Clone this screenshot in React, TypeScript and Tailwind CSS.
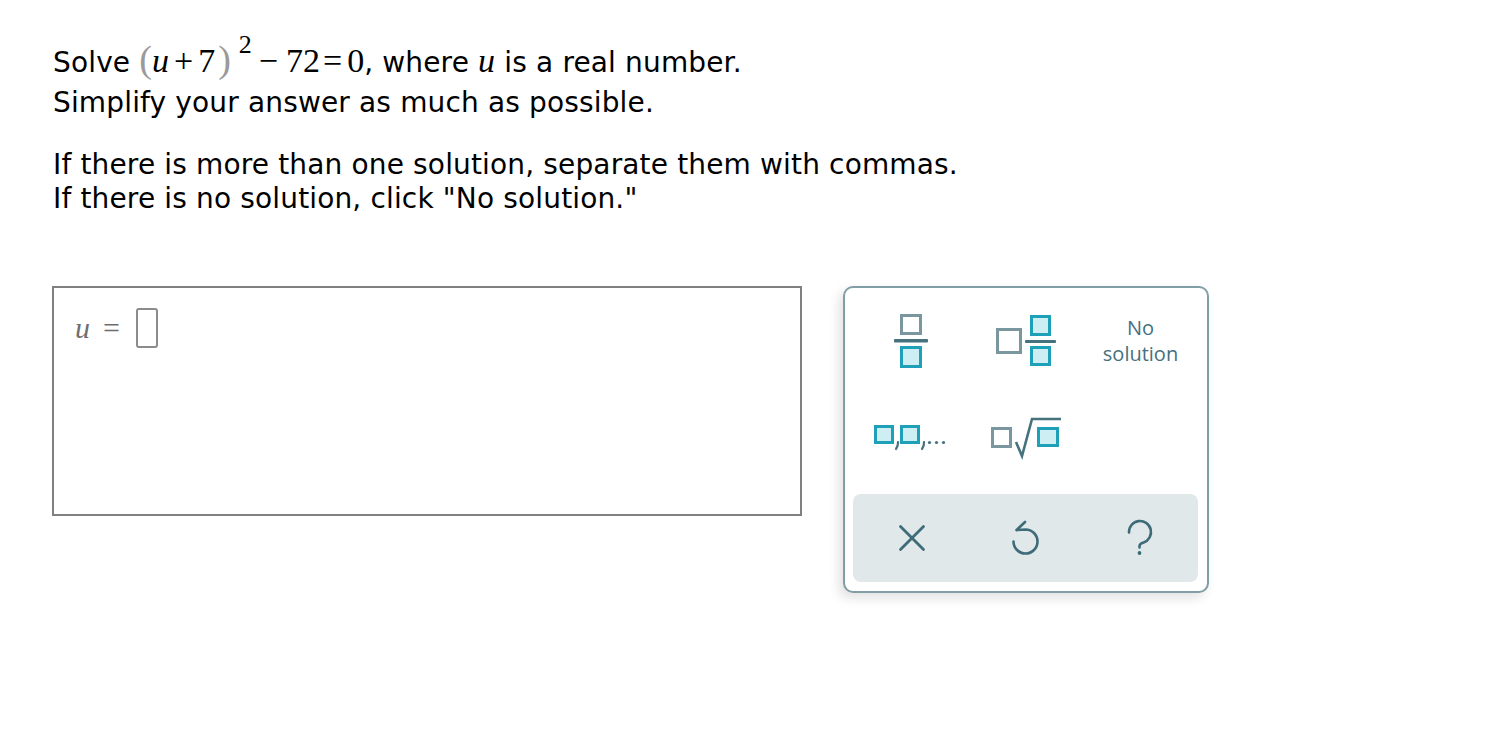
import React from "react";

const GREY = "#7a97a0";
const TEAL = "#1ea0b9";
const FILL = "#cdeef3";
const DARK = "#46727e";
const ICON = "#3e6b78";

function FractionIcon() {
  return (
    <svg width="36" height="58" viewBox="0 0 36 58">
      <rect x="8.5" y="3.5" width="19" height="18" fill="white" stroke={GREY} strokeWidth="3" />
      <rect x="1" y="27" width="34" height="3.5" rx="1" fill={DARK} />
      <rect x="8.5" y="35.5" width="19" height="19" fill={FILL} stroke={TEAL} strokeWidth="3" />
    </svg>
  );
}

function MixedIcon() {
  return (
    <svg width="64" height="56" viewBox="0 0 64 56">
      <rect x="3.5" y="16.5" width="23" height="23" fill="white" stroke={GREY} strokeWidth="3" />
      <rect x="37.5" y="3.5" width="18" height="18" fill={FILL} stroke={TEAL} strokeWidth="3" />
      <rect x="31" y="27" width="31" height="3" rx="1" fill={DARK} />
      <rect x="37.5" y="34.5" width="18" height="17" fill={FILL} stroke={TEAL} strokeWidth="3" />
    </svg>
  );
}

function ListIcon() {
  return (
    <svg width="78" height="32" viewBox="0 0 78 32">
      <rect x="3.5" y="5.5" width="17" height="16" fill={FILL} stroke={TEAL} strokeWidth="3" />
      <path d="M26 21 Q26.3 25 24 28" fill="none" stroke={DARK} strokeWidth="2.2" strokeLinecap="round" />
      <rect x="29.5" y="5.5" width="17" height="16" fill={FILL} stroke={TEAL} strokeWidth="3" />
      <path d="M52 21 Q52.3 25 50 28" fill="none" stroke={DARK} strokeWidth="2.2" strokeLinecap="round" />
      <circle cx="57.5" cy="21.5" r="1.6" fill={DARK} />
      <circle cx="64.5" cy="21.5" r="1.6" fill={DARK} />
      <circle cx="71.5" cy="21.5" r="1.6" fill={DARK} />
    </svg>
  );
}

function SqrtIcon() {
  return (
    <svg width="76" height="46" viewBox="0 0 76 46">
      <rect x="4.5" y="14.5" width="18" height="18" fill="white" stroke={GREY} strokeWidth="3" />
      <path d="M28 28 L34 42 L44 5 H73" fill="none" stroke={DARK} strokeWidth="2.6" />
      <rect x="50.5" y="14.5" width="19" height="17" fill={FILL} stroke={TEAL} strokeWidth="3" />
    </svg>
  );
}

function XIcon() {
  return (
    <svg width="28" height="28" viewBox="0 0 28 28">
      <path d="M2.5 2.5 L25.5 25.5 M25.5 2.5 L2.5 25.5" stroke={ICON} strokeWidth="2.8" strokeLinecap="round" />
    </svg>
  );
}

function UndoIcon() {
  return (
    <svg width="30" height="38" viewBox="0 0 30 38">
      <path d="M5.7 11 L14 3" fill="none" stroke={ICON} strokeWidth="2.6" strokeLinecap="round" />
      <path
        d="M5.7 11 L14.5 10.5 A12 12 0 1 1 2.5 22.5"
        fill="none"
        stroke={ICON}
        strokeWidth="2.6"
        strokeLinecap="round"
        strokeLinejoin="round"
      />
    </svg>
  );
}

function HelpIcon() {
  return (
    <svg width="28" height="38" viewBox="0 0 28 38">
      <path
        d="M2 13.5 A11 11 0 1 1 16.58 23.4 Q12.5 24.5 12.5 27 V28.5"
        fill="none"
        stroke={ICON}
        strokeWidth="2.6"
        strokeLinecap="round"
      />
      <circle cx="12.5" cy="34" r="1.9" fill={ICON} />
    </svg>
  );
}

export default function App() {
  const serif = { fontFamily: '"Liberation Serif", "Times New Roman", serif' };
  return (
    <div
      className="min-h-screen w-full bg-white text-black px-[53px] pt-[43px]"
      style={{ fontFamily: '"DejaVu Sans", Verdana, sans-serif' }}
    >
      <div className="text-[28px] tracking-[0.15px]">
        <div className="h-[40px] leading-[40px] whitespace-nowrap">
          Solve{" "}
          <span className="text-[34px] leading-[0.5] tracking-normal" style={serif}>
            <span className="text-[38px] leading-[0.5] text-[#9a9a9a]">(</span>
            <span className="italic">u</span>
            <span className="mx-[5px]">+</span>
            <span>7</span>
            <span className="text-[38px] leading-[0.5] text-[#9a9a9a] ml-[3px]">)</span>
            <span className="relative -top-[19px] text-[26px] ml-[8px]">2</span>
            <span className="ml-[7px]">−</span>
            <span className="ml-[8px]">72</span>
            <span className="ml-[3px]">=</span>
            <span className="ml-[5px]">0</span>
          </span>
          , where{" "}
          <span className="text-[34px] leading-[0.5] italic" style={serif}>
            u
          </span>{" "}
          is a real number.
        </div>
        <div className="mt-[3px] leading-[34px]">Simplify your answer as much as possible.</div>
        <div className="mt-[28px] leading-[34px]">
          <div>If there is more than one solution, separate them with commas.</div>
          <div>If there is no solution, click "No solution."</div>
        </div>
      </div>

      <div className="mt-[70px] -ml-[1px] flex items-start">
        <div className="w-[750px] h-[230px] border-2 border-[#808080] bg-white">
          <div className="mt-[20px] ml-[21px] flex items-center h-[40px]" style={serif}>
            <span className="italic text-[30px] leading-none text-[#6e6e6e]">u</span>
            <span className="ml-[13px] text-[30px] leading-none text-[#6e6e6e]">=</span>
            <span className="ml-[16px] w-[22px] h-[40px] border-2 border-[#8c8c8c] rounded-[3px]" />
          </div>
        </div>

        <div className="ml-[41px] w-[366px] h-[307px] border-2 border-[#819ea6] rounded-[10px] bg-white shadow-[-4px_5px_12px_rgba(0,0,0,0.12)] pl-[8px] pr-[9px] pb-[9px] flex flex-col">
          <div className="pt-[5px] pb-[9px] grid grid-cols-3 grid-rows-[96px_96px]">
            <div className="flex items-center justify-center">
              <FractionIcon />
            </div>
            <div className="flex items-center justify-center">
              <MixedIcon />
            </div>
            <div
              className="flex flex-col items-center justify-center text-[20px] leading-[26px] text-[#45707d]"
              style={{ fontFamily: '"Open Sans", sans-serif' }}
            >
              <span>No</span>
              <span>solution</span>
            </div>
            <div className="flex items-center justify-center">
              <ListIcon />
            </div>
            <div className="flex items-center justify-center">
              <SqrtIcon />
            </div>
            <div />
          </div>
          <div className="h-[88px] rounded-[8px] bg-[#e1e8ea] grid grid-cols-3">
            <div className="flex items-center justify-center pl-[3px]">
              <XIcon />
            </div>
            <div className="flex items-center justify-center">
              <UndoIcon />
            </div>
            <div className="flex items-center justify-center">
              <HelpIcon />
            </div>
          </div>
        </div>
      </div>
    </div>
  );
}
